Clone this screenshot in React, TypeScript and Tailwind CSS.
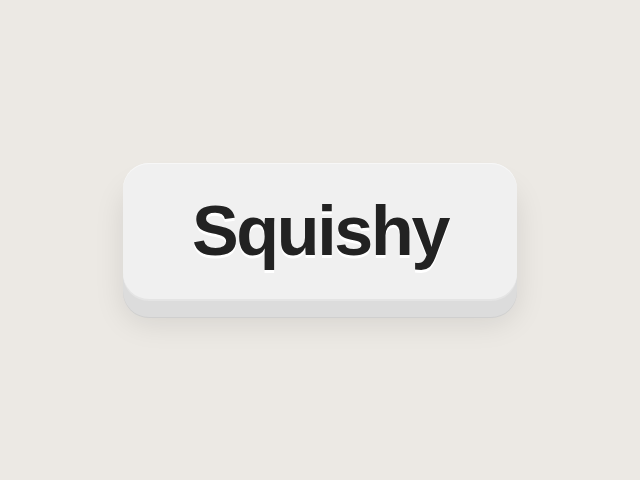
import React from 'react';

const App: React.FC = () => {
  return (
    <div className="flex h-screen w-full items-center justify-center bg-[#ece9e4]">
      {/* the key: face on top, the darker slab underneath gives it depth */}
      <div className="pb-[18px]">
        <button
          className="flex h-[136px] w-[394px] items-center justify-center rounded-[26px] bg-[#f0f0f0] shadow-[inset_0_1px_0_#f7f7f7,0_2px_0_#e4e4e4,0_18px_0_#dcdcdc,0_19px_0_#cfcfcf,0_24px_30px_rgba(0,0,0,0.10)]"
        >
          <span
            className="text-[70px] font-bold leading-none tracking-[-2.3px] text-[#222222] [text-shadow:0_3px_0_#ffffff] font-['Liberation_Sans',Arial,sans-serif]"
          >
            Squishy
          </span>
        </button>
      </div>
    </div>
  );
};

export default App;
